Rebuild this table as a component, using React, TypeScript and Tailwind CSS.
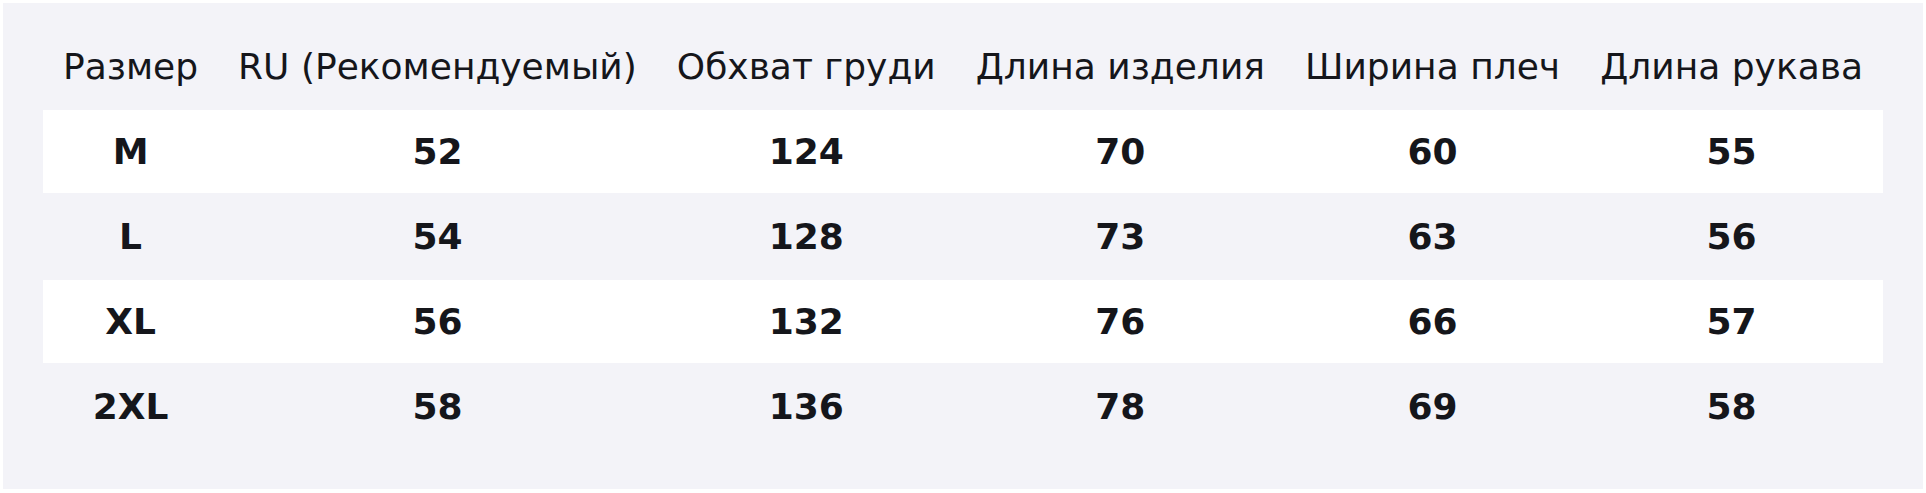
const headers = [
  "Размер",
  "RU (Рекомендуемый)",
  "Обхват груди",
  "Длина изделия",
  "Ширина плеч",
  "Длина рукава",
];

const rows = [
  ["M", "52", "124", "70", "60", "55"],
  ["L", "54", "128", "73", "63", "56"],
  ["XL", "56", "132", "76", "66", "57"],
  ["2XL", "58", "136", "78", "69", "58"],
];

export default function App() {
  return (
    <div className="bg-white p-[3px] font-['DejaVu_Sans',sans-serif] text-[#15161b]">
      <div className="bg-[#f3f3f8] px-[40px] pt-[40px] pb-[39px]">
        <table className="w-full border-separate border-spacing-x-0 border-spacing-y-[2px] text-[36px] leading-[42px]">
          <thead>
            <tr>
              {headers.map((h) => (
                <th key={h} className="px-[20px] pt-[1px] pb-[20px] text-center font-normal whitespace-nowrap">
                  {h}
                </th>
              ))}
            </tr>
          </thead>
          <tbody>
            {rows.map((row, i) => (
              <tr key={row[0]} className={i % 2 === 0 ? "bg-white" : ""}>
                {row.map((cell, j) => (
                  <td key={j} className="px-[20px] py-[20.5px] text-center font-bold">
                    {cell}
                  </td>
                ))}
              </tr>
            ))}
          </tbody>
        </table>
      </div>
    </div>
  );
}
